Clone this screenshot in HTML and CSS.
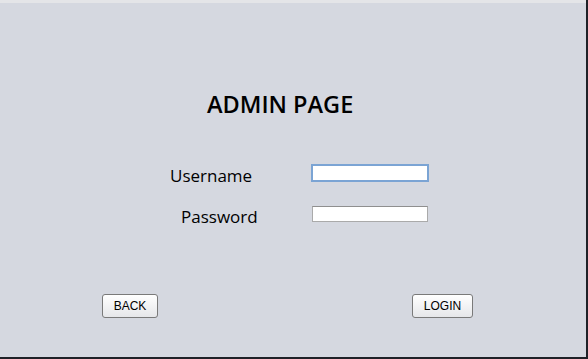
FILE: index.html
```html
<!DOCTYPE html>
<html lang="en">
<head>
  <meta charset="UTF-8" />
  <title>Admin Page</title>
  <link rel="stylesheet" href="styles.css">
</head>
<body>

  <div id="frame">
    <div id="panel">
      <h1 class="title">ADMIN PAGE</h1>

      <div class="form">
        <label class="label user-label" for="username">Username</label>
        <input class="field focused" id="username" type="text">
        <label class="label pass-label" for="password">Password</label>
        <input class="field" id="password" type="password">
      </div>

      <div class="buttons">
        <button class="btn back">BACK</button>
        <button class="btn login">LOGIN</button>
      </div>
    </div>
  </div>

</body>
</html>
```

FILE: styles.css
```css
html, body {
  margin: 0;
  padding: 0;
}

body {
  width: 588px;
  height: 359px;
  background-color: #1e2127;
  overflow: hidden;
}

#frame {
  width: 586px;
  height: 357px;
  border-top: 3px solid #e4e5e8;
  box-sizing: border-box;
  background-color: #d5d8e0;
}

#panel {
  display: flex;
  flex-direction: column;
  padding-top: 86px;
  font-family: "Open Sans", sans-serif;
  color: #000;
}

.title {
  margin: 0 0 0 207px;
  font-size: 23.5px;
  font-weight: 600;
  line-height: 30px;
}

.form {
  display: grid;
  grid-template-columns: 141px 120px;
  grid-template-rows: 18px 18px;
  row-gap: 23px;
  margin: 45px 0 0 170px;
  align-items: center;
}

.label {
  font-size: 17px;
  line-height: 22px;
  padding-top: 5px;
}

.pass-label {
  padding-left: 11px;
}

.field {
  margin: 0;
  padding: 0;
  box-sizing: border-box;
  background: #fff;
  outline: none;
}

#username {
  width: 118px;
  height: 18px;
  border: 2px solid #7ba4d4;
}

#password {
  width: 116px;
  height: 16px;
  margin-left: 1px;
  border: 1px solid #aaa;
  border-top-color: #8f8f8f;
}

.buttons {
  display: flex;
  justify-content: space-between;
  margin: 71px 0 0 102px;
  width: 371px;
}

.btn {
  height: 24px;
  padding: 0;
  border: 1px solid #7a7a7a;
  border-radius: 3px;
  background: linear-gradient(#ffffff, #e6e7ea);
  font-family: "Liberation Sans", Arial, sans-serif;
  font-size: 12px;
  color: #000;
}

.back {
  width: 56px;
}

.login {
  width: 61px;
}
```
